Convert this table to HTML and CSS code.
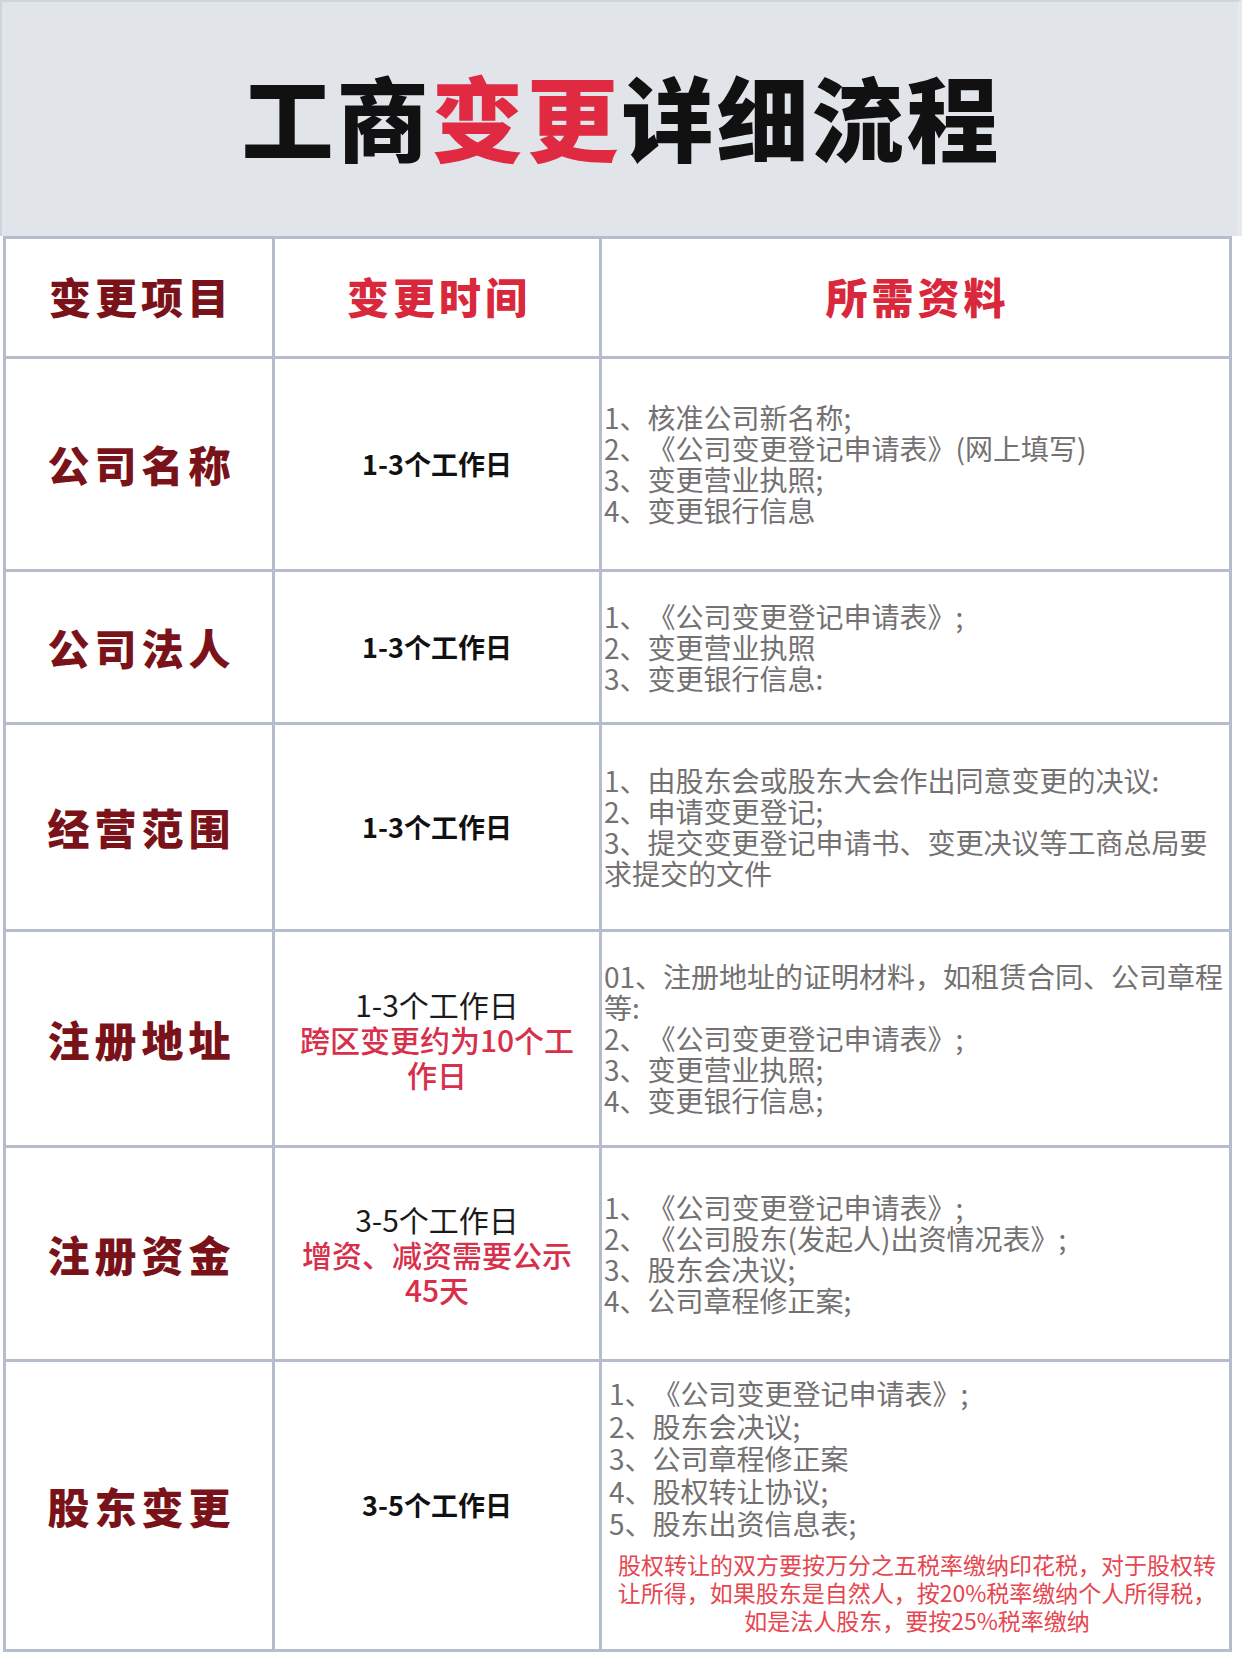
FILE: index.html
```html
<!DOCTYPE html>
<html lang="zh-CN">
<head>
<meta charset="utf-8">
<title>工商变更详细流程</title>
<link rel="stylesheet" href="styles.css">
</head>
<body>
<div class="page">
  <header class="hero">
    <h1 class="title"><span>工商</span><span class="title-red">变更</span><span>详细流程</span></h1>
  </header>

  <div class="table">
    <div class="cell head item">变更项目</div>
    <div class="cell head red">变更时间</div>
    <div class="cell head red">所需资料</div>

    <div class="cell item">公司名称</div>
    <div class="cell time"><span class="time-bold">1-3个工作日</span></div>
    <div class="cell docs">
      <div>1、核准公司新名称;</div>
      <div>2、《公司变更登记申请表》(网上填写)</div>
      <div>3、变更营业执照;</div>
      <div>4、变更银行信息</div>
    </div>

    <div class="cell item">公司法人</div>
    <div class="cell time"><span class="time-bold">1-3个工作日</span></div>
    <div class="cell docs">
      <div>1、《公司变更登记申请表》;</div>
      <div>2、变更营业执照</div>
      <div>3、变更银行信息:</div>
    </div>

    <div class="cell item">经营范围</div>
    <div class="cell time"><span class="time-bold">1-3个工作日</span></div>
    <div class="cell docs">
      <div>1、由股东会或股东大会作出同意变更的决议:</div>
      <div>2、申请变更登记;</div>
      <div>3、提交变更登记申请书、变更决议等工商总局要<br>求提交的文件</div>
    </div>

    <div class="cell item">注册地址</div>
    <div class="cell time">
      <div class="time-reg">1-3个工作日</div>
      <div class="time-red">跨区变更约为10个工<br>作日</div>
    </div>
    <div class="cell docs">
      <div>01、注册地址的证明材料，如租赁合同、公司章程<br>等:</div>
      <div>2、《公司变更登记申请表》;</div>
      <div>3、变更营业执照;</div>
      <div>4、变更银行信息;</div>
    </div>

    <div class="cell item">注册资金</div>
    <div class="cell time">
      <div class="time-reg">3-5个工作日</div>
      <div class="time-red">增资、减资需要公示<br>45天</div>
    </div>
    <div class="cell docs">
      <div>1、《公司变更登记申请表》;</div>
      <div>2、《公司股东(发起人)出资情况表》;</div>
      <div>3、股东会决议;</div>
      <div>4、公司章程修正案;</div>
    </div>

    <div class="cell item">股东变更</div>
    <div class="cell time"><span class="time-bold">3-5个工作日</span></div>
    <div class="cell docs docs-wide">
      <div>1、《公司变更登记申请表》;</div>
      <div>2、股东会决议;</div>
      <div>3、公司章程修正案</div>
      <div>4、股权转让协议;</div>
      <div>5、股东出资信息表;</div>
      <p class="note">股权转让的双方要按万分之五税率缴纳印花税，对于股权转<br>让所得，如果股东是自然人，按20%税率缴纳个人所得税，<br>如是法人股东，要按25%税率缴纳</p>
    </div>
  </div>
</div>
</body>
</html>
```

FILE: styles.css
```css
* {
  box-sizing: border-box;
}

html, body {
  margin: 0;
  padding: 0;
  background: #ffffff;
}

body {
  font-family: "Noto Sans CJK SC", "Noto Sans", "Liberation Sans", sans-serif;
  width: 1242px;
  height: 1660px;
  overflow: hidden;
  text-spacing-trim: space-all;
}

.page {
  width: 1242px;
}

.hero {
  height: 236px;
  background: #e1e5ea;
  border-top: 2px solid #cdd4de;
  border-left: 2px solid #cdd4de;
  border-right: 4px solid #e6e9ed;
  display: flex;
  align-items: center;
  justify-content: center;
  padding-top: 0;
  padding-bottom: 8px;
}

.title {
  margin: 0;
  font-size: 92px;
  line-height: 1;
  font-weight: 900;
  color: #111111;
  letter-spacing: 3px;
  padding-left: 3px;
  white-space: nowrap;
}

.title-red {
  color: #df2a42;
}

.table {
  width: 1229px;
  margin-left: 3px;
  display: grid;
  grid-template-columns: 266px 324px 627px;
  grid-template-rows: 117px 210px 150px 204px 213px 211px 287px;
  gap: 3px;
  padding: 3px;
  background: #b5bdcc;
}

.cell {
  background: #ffffff;
  display: flex;
  flex-direction: column;
  justify-content: center;
}

.head {
  align-items: center;
  font-size: 42px;
  font-weight: 900;
  letter-spacing: 4px;
  padding-left: 4px;
  line-height: 1;
  padding-bottom: 4px;
}

.head.red {
  color: #d9283c;
}

.item {
  align-items: center;
  color: #7a1219;
  font-size: 42px;
  font-weight: 900;
  letter-spacing: 5px;
  padding-left: 5px;
  line-height: 1;
}

.head.item {
  color: #7a1219;
  letter-spacing: 4px;
  padding-left: 4px;
}

.time {
  align-items: center;
  text-align: center;
  padding: 0 16px;
}

.time-bold {
  font-size: 27px;
  font-weight: 700;
  color: #111111;
  line-height: 1.2;
}

.time-reg {
  font-size: 30px;
  font-weight: 400;
  color: #1b1b1b;
  line-height: 36px;
}

.time-red {
  font-size: 30px;
  font-weight: 500;
  color: #d8304a;
  line-height: 35px;
}

.docs {
  padding: 0 0 0 2px;
  font-size: 28px;
  line-height: 31px;
  color: #737171;
  font-weight: 400;
  white-space: nowrap;
}

.docs-wide {
  padding-left: 7px;
  line-height: 32.5px;
}

.note {
  margin: 10px 0 0 0;
  font-size: 23px;
  line-height: 28px;
  color: #e6464f;
  text-align: center;
  padding-right: 4px;
}
```
